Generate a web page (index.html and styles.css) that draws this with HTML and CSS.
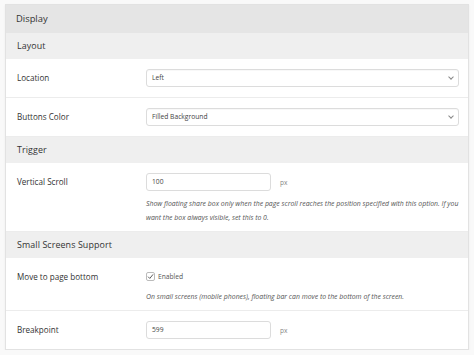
FILE: index.html
```html
<!DOCTYPE html>
<html>
    <head>
        <link rel="stylesheet" href="styles.css">
    </head>
    <body class="back">
        <div class="panel">
            <div class="panel-head">Display</div>

            <div class="section">Layout</div>
            <div class="row">
                <div class="label">Location</div>
                <div class="field">
                    <div class="select">Left<span class="arrow"></span></div>
                </div>
            </div>
            <div class="row">
                <div class="label">Buttons Color</div>
                <div class="field">
                    <div class="select">Filled Background<span class="arrow"></span></div>
                </div>
            </div>

            <div class="section">Trigger</div>
            <div class="row">
                <div class="label">Vertical Scroll</div>
                <div class="field">
                    <div class="inline">
                        <div class="input">100</div>
                        <span class="unit">px</span>
                    </div>
                    <p class="hint">Show floating share box only when the page scroll reaches the position specified with this option. If you want the box always visible, set this to 0.</p>
                </div>
            </div>

            <div class="section">Small Screens Support</div>
            <div class="row">
                <div class="label">Move to page bottom</div>
                <div class="field">
                    <div class="inline check-line">
                        <span class="check">
                            <svg width="7" height="7" viewBox="0 0 8 8"><path d="M1.2 4.2 L3.2 6.2 L6.9 1.6" fill="none" stroke="#555" stroke-width="1.1"/></svg>
                        </span>
                        <span class="check-text">Enabled</span>
                    </div>
                    <p class="hint short">On small screens (mobile phones), floating bar can move to the bottom of the screen.</p>
                </div>
            </div>
            <div class="row last">
                <div class="label">Breakpoint</div>
                <div class="field">
                    <div class="inline">
                        <div class="input">599</div>
                        <span class="unit">px</span>
                    </div>
                </div>
            </div>
        </div>
    </body>
</html>
```

FILE: styles.css
```css
html, body{
    margin: 0;
}

.back{
    background-color: #f9f9f9;
    padding: 4px 5px 0 5px;
    font-family: "Open Sans", "Noto Sans", sans-serif;
    color: #333;
}

.panel{
    width: 462px;
    background-color: #fff;
    border: 1px solid #e2e2e2;
    box-shadow: 0 1px 2px rgba(0,0,0,0.06);
}

.panel-head{
    background-color: #e5e5e5;
    height: 28px;
    line-height: 28px;
    padding-left: 10px;
    font-size: 9.4px;
    color: #333;
}

.section{
    background-color: #efefef;
    height: 26px;
    line-height: 26px;
    padding-left: 11px;
    font-size: 8.9px;
    letter-spacing: 0.1px;
    color: #333;
}

.row{
    display: grid;
    grid-template-columns: 129px 1fr;
    padding: 10px 9px 10px 11px;
    border-bottom: 1px solid #ececec;
}

.row.last{
    border-bottom: none;
}

.label{
    font-size: 8.1px;
    line-height: 18px;
    color: #333;
}

.field{
    font-size: 6.7px;
}

.select{
    height: 16px;
    line-height: 16px;
    border: 1px solid #dcdcdc;
    border-radius: 3px;
    padding-left: 5px;
    color: #444;
    position: relative;
    box-shadow: inset 0 1px 1px rgba(0,0,0,0.03);
}

.arrow{
    position: absolute;
    right: 5px;
    top: 5px;
    width: 3px;
    height: 3px;
    border-right: 1px solid #888;
    border-bottom: 1px solid #888;
    transform: rotate(45deg);
}

.inline{
    display: flex;
    align-items: center;
    height: 18px;
}

.input{
    width: 118px;
    height: 16px;
    line-height: 16px;
    border: 1px solid #dcdcdc;
    border-radius: 3px;
    padding-left: 5px;
    color: #444;
}

.unit{
    margin-left: 9px;
    color: #888;
    font-size: 6.6px;
}

.hint{
    margin: 6px 0 -4px 0;
    font-size: 6.9px;
    line-height: 14px;
    font-style: italic;
    color: #555;
}

.hint.short{
    margin-top: 5px;
}

.check-line{
    height: 17px;
}

.check{
    width: 7px;
    height: 7px;
    border: 1px solid #bbb;
    border-radius: 2px;
    display: flex;
    align-items: center;
    justify-content: center;
    background-color: #fff;
}

.check-text{
    margin-left: 3px;
    color: #555;
}
```
